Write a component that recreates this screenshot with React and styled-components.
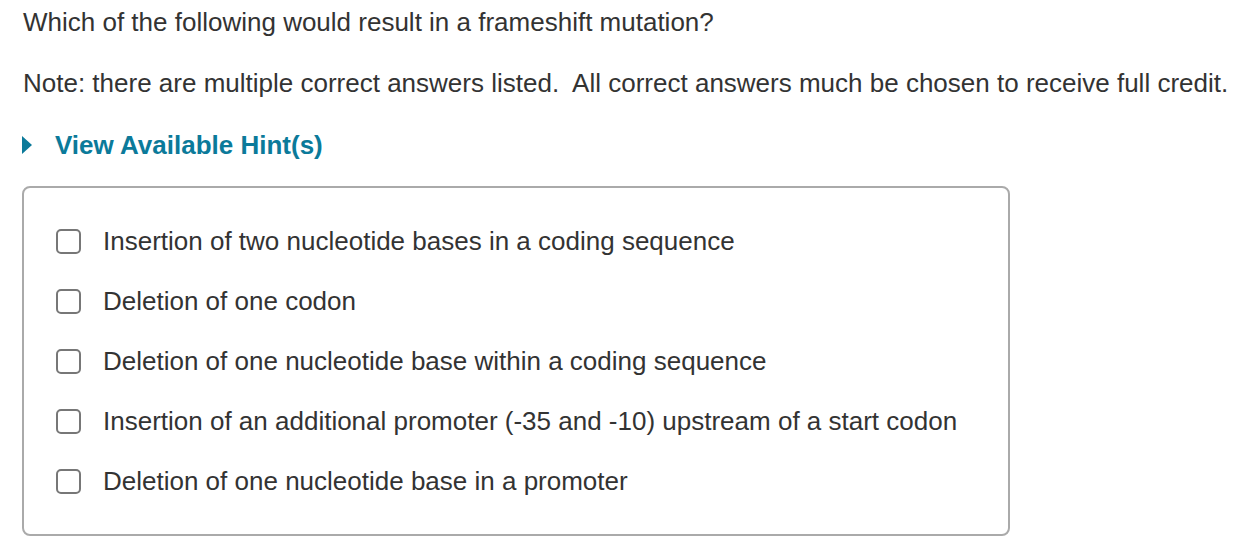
import React from 'react'
import styled, { createGlobalStyle } from 'styled-components'

const GlobalStyle = createGlobalStyle`
  body {
    margin: 0;
    background: #fff;
    font-family: "Liberation Sans", Arial, Helvetica, sans-serif;
    color: #333;
  }
`

const options = [
  'Insertion of two nucleotide bases in a coding sequence',
  'Deletion of one codon',
  'Deletion of one nucleotide base within a coding sequence',
  'Insertion of an additional promoter (-35 and -10) upstream of a start codon',
  'Deletion of one nucleotide base in a promoter',
]

export default function App() {
  return (
    <>
      <GlobalStyle />
      <Page>
        <Question>Which of the following would result in a frameshift mutation?</Question>
        <Note>
          Note: there are multiple correct answers listed.&nbsp; All correct answers much be chosen to receive full credit.
        </Note>
        <HintToggle>
          <Arrow />
          <HintText>View Available Hint(s)</HintText>
        </HintToggle>
        <AnswerBox>
          {options.map((o) => (
            <Option key={o}>
              <Box type="checkbox" />
              <span>{o}</span>
            </Option>
          ))}
        </AnswerBox>
      </Page>
    </>
  )
}

const Page = styled.div`
  padding: 7px 0 0 23px;
  font-size: 26px;
  line-height: 30px;
`

const Question = styled.p`
  margin: 0;
`

const Note = styled.p`
  margin: 31px 0 0;
`

const HintToggle = styled.div`
  display: flex;
  align-items: center;
  margin-top: 32px;
  cursor: pointer;
`

const Arrow = styled.span`
  width: 0;
  height: 0;
  margin-left: -1px;
  border-top: 9px solid transparent;
  border-bottom: 9px solid transparent;
  border-left: 10px solid #0b7a9a;
  margin-right: 23px;
`

const HintText = styled.span`
  color: #0b7a9a;
  font-weight: bold;
`

const AnswerBox = styled.div`
  box-sizing: border-box;
  width: 988px;
  margin: 26px 0 0 -1px;
  padding: 38px 0 38px 32px;
  border: 2px solid #aaa;
  border-radius: 8px;
  display: flex;
  flex-direction: column;
  gap: 30px;
`

const Option = styled.label`
  display: flex;
  align-items: center;
  gap: 22px;
  height: 30px;
`

const Box = styled.input`
  appearance: none;
  margin: 0;
  width: 25px;
  height: 25px;
  border: 2px solid #777;
  border-radius: 5px;
  background: #fff;
  flex-shrink: 0;
`
